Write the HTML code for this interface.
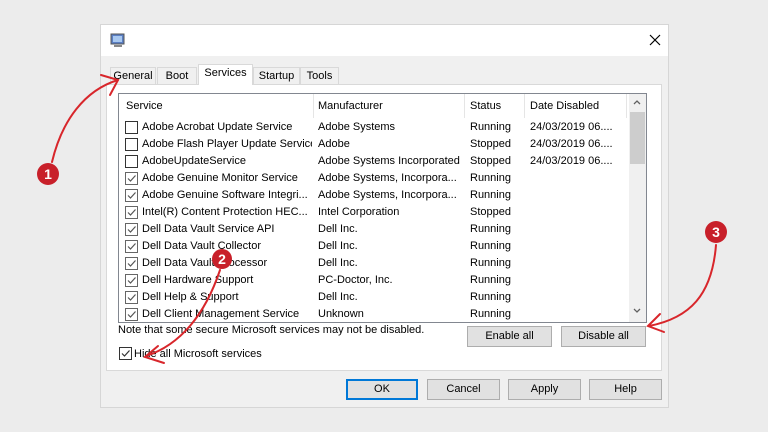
<!DOCTYPE html>
<html><head><meta charset="utf-8"><style>
*{margin:0;padding:0;box-sizing:border-box}
body{width:768px;height:432px;background:#ececec;position:relative;overflow:hidden;font-family:"Liberation Sans",sans-serif;font-size:11px;color:#000}
.a{position:absolute;white-space:nowrap}
.dlg{position:absolute;left:100px;top:24px;width:569px;height:384px;background:#f0f0f0;border:1px solid #d6d6d6}
.title{position:absolute;left:0;top:0;width:567px;height:31px;background:#fff}
.tab{position:absolute;top:42px;height:18px;border:1px solid #d9d9d9;border-bottom:none;background:#f0f0f0;padding-top:2px;text-align:center}
.panel{position:absolute;left:5px;top:59px;width:556px;height:287px;background:#fff;border:1px solid #d9d9d9}
.list{position:absolute;left:118px;top:93px;width:529px;height:230px;border:1px solid #828790;background:#fff;overflow:hidden}
.cb{position:absolute;width:13px;height:13px;border:1px solid #333;background:#fff}
.btn{position:absolute;height:21px;background:#e1e1e1;border:1px solid #adadad;text-align:center;line-height:19px;font-size:11px}
.sep{position:absolute;top:0;width:1px;height:24px;background:#e5e5e5}
.c{overflow:hidden}
</style></head><body>
<div class="dlg">
 <div class="title"></div>
 <svg class="a" style="left:9px;top:8px" width="16" height="16"><rect x="1" y="1" width="13" height="10" fill="#5a7fc4" stroke="#555"/><rect x="3" y="3" width="9" height="6" fill="#a8c8f0"/><rect x="4" y="12" width="8" height="2" fill="#888"/></svg>
 <svg class="a" style="left:548px;top:9px" width="12" height="12"><path d="M1 1L11 11M11 1L1 11" stroke="#000" stroke-width="1.2"/></svg>
 <div class="tab" style="left:9px;width:46px">General</div>
 <div class="tab" style="left:56px;width:40px">Boot</div>
 <div class="tab" style="left:97px;top:39px;height:21px;width:55px;background:#fff;z-index:2">Services</div>
 <div class="tab" style="left:152px;width:47px">Startup</div>
 <div class="tab" style="left:199px;width:39px">Tools</div>
 <div class="panel"></div>
</div>
<div class="list">
 <div class="a" style="left:7px;top:6px">Service</div>
 <div class="sep" style="left:194px"></div>
 <div class="a" style="left:199px;top:6px">Manufacturer</div>
 <div class="sep" style="left:345px"></div>
 <div class="a" style="left:351px;top:6px">Status</div>
 <div class="sep" style="left:405px"></div>
 <div class="a" style="left:411px;top:6px">Date Disabled</div>
 <div class="sep" style="left:507px"></div>
 <div class="a" style="left:510px;top:0;width:17px;height:228px;background:#f0f0f0"></div>
 <div class="a" style="left:511px;top:18px;width:15px;height:52px;background:#cdcdcd"></div>
 <svg class="a" style="left:513px;top:4px" width="10" height="8"><path d="M2 6L5 3L8 6" stroke="#606060" fill="none" stroke-width="1.3"/></svg>
 <svg class="a" style="left:513px;top:213px" width="10" height="8"><path d="M2 2L5 5L8 2" stroke="#606060" fill="none" stroke-width="1.3"/></svg>
</div>
<div id="rows"></div>
<div class="a" style="left:118px;top:324px">Note that some secure Microsoft services may not be disabled.</div>
<div class="btn" style="left:467px;top:326px;width:85px">Enable all</div>
<div class="btn" style="left:561px;top:326px;width:85px">Disable all</div>
<div class="cb" style="left:119px;top:347px"></div>
<svg class="a" style="left:119px;top:347px" width="13" height="13"><path d="M3 6.5L5.5 9L10.5 3.5" stroke="#333" fill="none" stroke-width="1.2"/></svg>
<div class="a" style="left:134px;top:348px">Hide all Microsoft services</div>
<div class="btn" style="left:346px;top:379px;width:72px;border:2px solid #0078d7;line-height:17px">OK</div>
<div class="btn" style="left:427px;top:379px;width:73px">Cancel</div>
<div class="btn" style="left:508px;top:379px;width:73px">Apply</div>
<div class="btn" style="left:589px;top:379px;width:73px">Help</div>
<svg class="a" style="left:0;top:0" width="768" height="432">
 <g fill="none" stroke="#d8262b" stroke-width="2" stroke-linecap="round">
  <path d="M52 162 C62 120 85 90 118 80"/><path d="M101 75 L118 80 L110 95"/>
  <path d="M220 270 C205 315 180 345 146 356"/><path d="M158 346 L145 357 L164 363"/>
  <path d="M716 245 C712 295 690 318 649 326"/><path d="M660 314 L648 326 L664 332"/>
 </g>
 <g fill="#c8202a"><circle cx="48" cy="174" r="11"/><circle cx="222" cy="259" r="10"/><circle cx="716" cy="232" r="11"/></g>
 <g fill="#fff" font-family="Liberation Sans" font-weight="bold" font-size="14" text-anchor="middle"><text x="48" y="179">1</text><text x="222" y="264">2</text><text x="716" y="237">3</text></g>
</svg>
<script>
var d=[["Adobe Acrobat Update Service","Adobe Systems","Running","24/03/2019 06....",0],
["Adobe Flash Player Update Service","Adobe","Stopped","24/03/2019 06....",0],
["AdobeUpdateService","Adobe Systems Incorporated","Stopped","24/03/2019 06....",0],
["Adobe Genuine Monitor Service","Adobe Systems, Incorpora...","Running","",1],
["Adobe Genuine Software Integri...","Adobe Systems, Incorpora...","Running","",1],
["Intel(R) Content Protection HEC...","Intel Corporation","Stopped","",1],
["Dell Data Vault Service API","Dell Inc.","Running","",1],
["Dell Data Vault Collector","Dell Inc.","Running","",1],
["Dell Data Vault Processor","Dell Inc.","Running","",1],
["Dell Hardware Support","PC-Doctor, Inc.","Running","",1],
["Dell Help & Support","Dell Inc.","Running","",1],
["Dell Client Management Service","Unknown","Running","",1]];
var h="";d.forEach(function(r,i){var y=121+i*17;
h+='<div class="a" style="left:119px;top:'+y+'px;width:510px;height:17px;overflow:hidden;clip-path:inset(0 0 '+(y+17>322?(y+17-322):0)+'px 0)">'+
'<div class="cb" style="left:6px;top:0px;'+(r[4]?'border-color:#666':'')+'"></div>'+
(r[4]?'<svg class="a" style="left:6px;top:0px" width="13" height="13"><path d="M3 6.5L5.5 9L10.5 3.5" stroke="#555" fill="none" stroke-width="1.2"/></svg>':'')+
'<div class="a c" style="left:23px;top:0px;width:170px">'+r[0].replace("&","&amp;")+'</div><div class="a c" style="left:199px;top:0px;width:148px">'+r[1]+'</div><div class="a" style="left:351px;top:0px">'+r[2]+'</div><div class="a" style="left:411px;top:0px">'+r[3]+'</div></div>';});
document.getElementById("rows").innerHTML=h;
</script>
</body></html>
